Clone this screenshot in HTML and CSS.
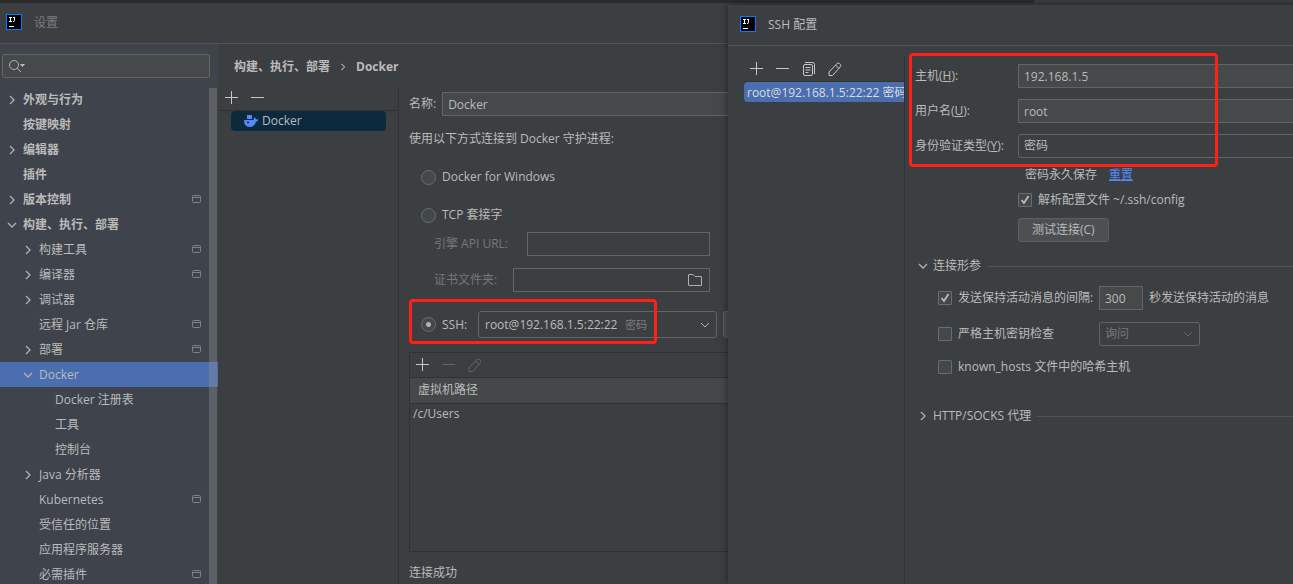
FILE: index.html
```html
<!DOCTYPE html>
<html lang="zh-CN">
<head>
    <meta charset="UTF-8">
    <meta name="viewport" content="width=device-width, initial-scale=1.0">
    <title>设置</title>
    <link rel="stylesheet" href="styles.css">
</head>
<body>
    <svg class="sprite" aria-hidden="true">
        <symbol id="logo" viewBox="0 0 16 16">
            <rect width="16" height="16" fill="#087cfa" stroke="none"/>
            <rect x="1" y="1" width="14" height="14" fill="#000" stroke="none"/>
            <path d="M3 3.500h3M4.500 3.500v4M3 7.500h3M7 3.500h2M8.500 3v3.500q0 1-1.500 1M3 12.500h5" fill="none" stroke="#fff" stroke-width="1"/>
        </symbol>
        <symbol id="right" viewBox="0 0 10 10"><path d="M3 1l4 4-4 4"/></symbol>
        <symbol id="down" viewBox="0 0 10 10"><path d="M1 3l4 4 4-4"/></symbol>
        <symbol id="plus" viewBox="0 0 16 16"><path d="M8.500 1v13M2 7.500h13"/></symbol>
        <symbol id="minus" viewBox="0 0 16 16"><path d="M2 7.500h13"/></symbol>
        <symbol id="pencil" viewBox="0 0 16 16"><path d="M3 14.500v-3.500l8-8.500q1.200-1 2.500 0l.8.8q1 1.300 0 2.500L6.500 14.500zM9.500 4l3.500 3.500"/></symbol>
        <symbol id="copy" viewBox="0 0 16 16"><rect x="3.500" y="3.500" width="9" height="11" rx="1.500"/><path d="M5 1.500h7.500q2 0 2 2V13M5.500 6.500h5M5.500 9h5M5.500 11.500h3"/></symbol>
        <symbol id="folder" viewBox="0 0 16 16"><path d="M1.500 13V3q0-.5.5-.5h4l2 2h6q.5 0 .5.5v8q0 .5-.5.5H2q-.5 0-.5-.5z"/></symbol>
        <symbol id="project" viewBox="0 0 10 10"><path d="M1.500.5h6q1 0 1 1v5q0 1-1 1h-6q-1 0-1-1v-5q0-1 1-1zM.5 2.500h8"/></symbol>
        <symbol id="docker" viewBox="0 0 16 16"><path d="M4 2h5v4H4zM1 7h9.500q.3-2.200 1.200-3l1.300 2.200 2.500.3q-.6 1.700-2.700 2.500Q11.500 14 6.500 14 1 14 1 7z" fill="#548af7" stroke="none"/><circle cx="5" cy="9.500" r="1" fill="#0d293e" stroke="none"/></symbol>
    </svg>

    <div class="editor"></div>

    <main class="settings">
        <header class="title-bar">
            <svg class="logo"><use href="#logo"/></svg>
            <h1 class="muted">设置</h1>
        </header>

        <div class="settings-body">
            <aside class="sidebar">
                <label class="search">
                    <svg class="search-icon" viewBox="0 0 18 14"><circle cx="6" cy="6" r="4.500"/><path d="M9 9l4 4"/><path d="M12 5h5l-2.500 3z" fill="#bbb" stroke="none"/></svg>
                    <input type="search" aria-label="搜索">
                </label>
                <nav class="tree">
                    <a href="#" class="node top"><svg class="arrow"><use href="#right"/></svg>外观与行为</a>
                    <a href="#" class="node top"><span class="arrow"></span>按键映射</a>
                    <a href="#" class="node top"><svg class="arrow"><use href="#right"/></svg>编辑器</a>
                    <a href="#" class="node top"><span class="arrow"></span>插件</a>
                    <a href="#" class="node top"><svg class="arrow"><use href="#right"/></svg>版本控制<svg class="project"><use href="#project"/></svg></a>
                    <a href="#" class="node top"><svg class="arrow"><use href="#down"/></svg>构建、执行、部署</a>
                    <a href="#" class="node child"><svg class="arrow"><use href="#right"/></svg>构建工具<svg class="project"><use href="#project"/></svg></a>
                    <a href="#" class="node child"><svg class="arrow"><use href="#right"/></svg>编译器<svg class="project"><use href="#project"/></svg></a>
                    <a href="#" class="node child"><svg class="arrow"><use href="#right"/></svg>调试器</a>
                    <a href="#" class="node child"><span class="arrow"></span>远程 Jar 仓库<svg class="project"><use href="#project"/></svg></a>
                    <a href="#" class="node child"><svg class="arrow"><use href="#right"/></svg>部署<svg class="project"><use href="#project"/></svg></a>
                    <a href="#" class="node child selected"><svg class="arrow"><use href="#down"/></svg>Docker</a>
                    <a href="#" class="node leaf"><span class="arrow"></span>Docker 注册表</a>
                    <a href="#" class="node leaf"><span class="arrow"></span>工具</a>
                    <a href="#" class="node leaf"><span class="arrow"></span>控制台</a>
                    <a href="#" class="node child"><svg class="arrow"><use href="#right"/></svg>Java 分析器</a>
                    <a href="#" class="node child"><span class="arrow"></span>Kubernetes<svg class="project"><use href="#project"/></svg></a>
                    <a href="#" class="node child"><span class="arrow"></span>受信任的位置</a>
                    <a href="#" class="node child"><span class="arrow"></span>应用程序服务器</a>
                    <a href="#" class="node child"><span class="arrow"></span>必需插件<svg class="project"><use href="#project"/></svg></a>
                </nav>
                <div class="scrollbar"></div>
            </aside>

            <section class="content">
                <div class="breadcrumb">
                    <span>构建、执行、部署</span>
                    <svg class="arrow"><use href="#right"/></svg>
                    <span>Docker</span>
                </div>
                <div class="split">
                    <div class="servers">
                        <div class="toolbar">
                            <button aria-label="添加"><svg><use href="#plus"/></svg></button>
                            <button aria-label="移除"><svg><use href="#minus"/></svg></button>
                        </div>
                        <a href="#" class="server"><svg><use href="#docker"/></svg>Docker</a>
                    </div>

                    <form class="docker-form">
                        <div class="name-row">
                            <label for="name">名称:</label>
                            <input type="text" id="name" value="Docker">
                        </div>
                        <p class="hint">使用以下方式连接到 Docker 守护进程:</p>
                        <label class="radio-row"><input type="radio" name="daemon">Docker for Windows</label>
                        <label class="radio-row"><input type="radio" name="daemon">TCP 套接字</label>
                        <div class="tcp-row api">
                            <label for="api">引擎 API URL:</label>
                            <input type="text" id="api" disabled>
                        </div>
                        <div class="tcp-row certs">
                            <label for="certs">证书文件夹:</label>
                            <div class="folder-field">
                                <input type="text" id="certs" disabled>
                                <svg><use href="#folder"/></svg>
                            </div>
                        </div>
                        <div class="ssh-row">
                            <label class="radio-label"><input type="radio" name="daemon" checked>SSH:</label>
                            <div class="combo">
                                <select aria-label="SSH 配置"><option>root@192.168.1.5:22:22</option></select>
                                <span class="combo-note muted">密码</span>
                                <svg><use href="#down"/></svg>
                            </div>
                            <button type="button" class="button">...</button>
                            <div class="mark"></div>
                        </div>
                        <div class="paths">
                            <div class="toolbar">
                                <button type="button" aria-label="添加"><svg><use href="#plus"/></svg></button>
                                <button type="button" aria-label="移除" disabled><svg><use href="#minus"/></svg></button>
                                <button type="button" aria-label="编辑" disabled><svg><use href="#pencil"/></svg></button>
                            </div>
                            <table>
                                <thead><tr><th>虚拟机路径</th></tr></thead>
                                <tbody><tr><td>/c/Users</td></tr></tbody>
                            </table>
                        </div>
                        <p class="status">连接成功</p>
                    </form>
                </div>
            </section>
        </div>
    </main>

    <section class="dialog">
        <header class="title-bar">
            <svg class="logo"><use href="#logo"/></svg>
            <h2>SSH 配置</h2>
        </header>
        <div class="dialog-body">
            <div class="configs">
                <div class="toolbar">
                    <button aria-label="添加"><svg><use href="#plus"/></svg></button>
                    <button aria-label="移除"><svg><use href="#minus"/></svg></button>
                    <button aria-label="复制"><svg><use href="#copy"/></svg></button>
                    <button aria-label="编辑"><svg><use href="#pencil"/></svg></button>
                </div>
                <a href="#" class="config">root@192.168.1.5:22:22 密码</a>
            </div>

            <form class="ssh-form">
                <div class="fields">
                    <label for="host">主机(<u>H</u>):</label>
                    <input type="text" id="host" value="192.168.1.5">
                    <label for="user">用户名(<u>U</u>):</label>
                    <input type="text" id="user" value="root">
                    <label for="auth">身份验证类型(<u>Y</u>):</label>
                    <select id="auth"><option>密码</option></select>
                    <div class="mark"></div>
                </div>
                <div class="extra">
                    <p class="saved">密码永久保存<a href="#">重置</a></p>
                    <label class="check"><input type="checkbox" checked>解析配置文件 ~/.ssh/config</label>
                    <button type="button" class="button test">测试连接(C)</button>
                </div>

                <h3 class="group"><svg class="arrow"><use href="#down"/></svg>连接形参</h3>
                <div class="params">
                    <label class="check"><input type="checkbox" checked>发送保持活动消息的间隔:</label>
                    <div class="interval">
                        <input type="text" id="interval" value="300">
                        <label for="interval">秒发送保持活动的消息</label>
                    </div>
                    <label class="check"><input type="checkbox">严格主机密钥检查</label>
                    <div class="combo ask">
                        <select aria-label="严格主机密钥检查" disabled><option>询问</option></select>
                        <svg><use href="#down"/></svg>
                    </div>
                    <label class="check wide"><input type="checkbox">known_hosts 文件中的哈希主机</label>
                </div>
                <h3 class="group proxy"><svg class="arrow"><use href="#right"/></svg>HTTP/SOCKS 代理</h3>
            </form>
        </div>
    </section>
</body>
</html>
```
FILE: styles.css
```css
* {
    box-sizing: border-box;
}

body {
    margin: 0;
    height: 100vh;
    display: flex;
    flex-direction: column;
    position: relative;
    overflow: hidden;
    background-color: #3c3f41;
    color: #bbbbbb;
    font: 12px/18px "Open Sans", "Noto Sans CJK SC", sans-serif;
}

h1, h2, h3, p {
    margin: 0;
    font-size: 12px;
    font-weight: normal;
}

a {
    color: inherit;
    text-decoration: none;
}

svg {
    flex: none;
    fill: none;
    stroke: #afb1b3;
    stroke-width: 1;
}

.sprite {
    position: absolute;
    width: 0;
    height: 0;
}

input, select, button {
    margin: 0;
    font: inherit;
    color: inherit;
}

input[type="text"], select {
    height: 24px;
    min-width: 0;
    padding: 0 5px;
    border: 1px solid #646464;
    border-radius: 0;
    background-color: #45494a;
    outline: none;
}

select {
    appearance: none;
    border-radius: 3px;
    background-color: #3c3f41;
    opacity: 1;
}

input[type="text"]:disabled {
    background-color: #3c3f41;
}

.muted {
    color: #7c7c7c;
}

.editor {
    height: 3px;
    flex: none;
    background: linear-gradient(to right, #2b2b2b 80%, #3c3f41 80%);
}

.title-bar {
    display: flex;
    align-items: center;
    gap: 12px;
    height: 41px;
    flex: none;
    padding: 0 6px 2px;
    border-bottom: 1px solid #515355;
}

.logo {
    width: 16px;
    height: 16px;
}

.title-bar h1, .title-bar h2 {
    padding-top: 2px;
}

/* settings window */
.settings {
    flex: 1;
    min-height: 0;
    display: flex;
    flex-direction: column;
}

.settings-body {
    flex: 1;
    min-height: 0;
    display: flex;
}

.sidebar {
    position: relative;
    width: 218px;
    flex: none;
    overflow: hidden;
    background-color: #3e434c;
}

.search {
    display: flex;
    align-items: center;
    height: 24px;
    margin: 10px 8px 9px 2px;
    padding-left: 5px;
    border: 1px solid #646464;
    border-radius: 2px;
    background-color: #45494a;
}

.search input {
    flex: 1;
    min-width: 0;
    border: none;
    background: none;
    outline: none;
}

.search-icon {
    width: 18px;
    height: 14px;
}

.node {
    display: flex;
    align-items: center;
    height: 25px;
    padding-right: 16px;
    padding-left: 7px;
}

.arrow {
    width: 10px;
    height: 10px;
    flex: none;
    margin-right: 6px;
    stroke-width: 1.3;
}

.node.top {
    font-weight: bold;
}

.node.child {
    padding-left: 23px;
}

.node.leaf {
    padding-left: 39px;
}

.node.selected {
    background-color: #4b6eaf;
}

.project {
    width: 10px;
    height: 10px;
    margin-left: auto;
    stroke: #7d8188;
}

.scrollbar {
    position: absolute;
    top: 44px;
    right: 1px;
    bottom: 0;
    width: 8px;
    background-color: rgba(150, 150, 150, 0.35);
}

.content {
    flex: 1;
    min-width: 0;
    display: flex;
    flex-direction: column;
}

.breadcrumb {
    display: flex;
    align-items: center;
    gap: 9px;
    height: 42px;
    padding: 4px 16px 0;
    font-weight: bold;
}

.breadcrumb .arrow {
    width: 8px;
    height: 8px;
    margin: 0;
}

.split {
    flex: 1;
    display: flex;
}

.servers {
    width: 181px;
    flex: none;
    border-right: 1px solid #313335;
}

.toolbar {
    display: flex;
    align-items: center;
    gap: 10px;
    height: 25px;
    padding-left: 5px;
    border-bottom: 1px solid #323232;
}

.toolbar button {
    padding: 0;
    border: none;
    background: none;
}

.toolbar svg {
    display: block;
    width: 16px;
    height: 16px;
    stroke: #c5c7c9;
}

.toolbar button:disabled svg {
    stroke: #626466;
}

.server {
    display: flex;
    align-items: center;
    gap: 3px;
    height: 20px;
    margin: 0 12px 0 13px;
    padding-left: 12px;
    border-radius: 4px;
    background-color: #0d293e;
}

.server svg {
    width: 16px;
    height: 16px;
}

.docker-form {
    flex: 1;
    padding: 6px 10px 0;
}

.name-row {
    display: flex;
    align-items: center;
    gap: 6px;
}

.name-row input {
    flex: 1;
}

.hint {
    margin-top: 14px;
}

.radio-row {
    display: flex;
    align-items: center;
    gap: 6px;
    margin-top: 20px;
    padding-left: 12px;
}

input[type="radio"] {
    appearance: none;
    width: 15px;
    height: 15px;
    border: 1px solid #6b6b6b;
    border-radius: 50%;
    background-color: #43494a;
}

input[type="radio"]:checked {
    background-image: radial-gradient(circle, #b0b0b0 2px, transparent 3px);
}

.tcp-row {
    display: flex;
    align-items: center;
    gap: 16px;
    width: 301px;
    margin-top: 8px;
    padding-left: 25px;
    color: #777777;
}

.tcp-row.api label {
    width: 77px;
}

.tcp-row.certs {
    margin-top: 12px;
}

.tcp-row > input {
    flex: 1;
}

.folder-field {
    display: flex;
    flex: 1;
    position: relative;
}

.folder-field input {
    flex: 1;
    padding-right: 24px;
}

.folder-field svg {
    position: absolute;
    top: 4px;
    right: 7px;
    width: 16px;
    height: 16px;
}

.ssh-row {
    display: flex;
    position: relative;
    margin-top: 19px;
    padding-left: 12px;
}

.radio-label {
    display: flex;
    align-items: center;
    gap: 6px;
    width: 57px;
}

.combo {
    display: flex;
    position: relative;
    width: 239px;
}

.combo select {
    flex: 1;
    padding: 0 6px;
}

.ssh-row select {
    height: 27px;
}

.combo svg {
    position: absolute;
    top: 9px;
    right: 7px;
    width: 10px;
    height: 10px;
    pointer-events: none;
}

.combo-note {
    position: absolute;
    top: 5px;
    left: 147px;
    font-size: 11px;
    pointer-events: none;
}

.button {
    padding: 0 12px;
    border: 1px solid #5e6060;
    border-radius: 3px;
    background-color: #4c5052;
}

.ssh-row .button {
    margin-left: 6px;
}

/* red frames over the fields to fill in */
.mark {
    position: absolute;
    border: 3px solid #ff2116;
    border-radius: 4px;
    pointer-events: none;
}

.ssh-row .mark {
    top: -12px;
    bottom: -6px;
    left: 0;
    width: 248px;
}

.paths {
    height: 200px;
    margin-top: 14px;
    border: 1px solid #323232;
}

.paths .toolbar {
    padding-left: 4px;
}

table {
    width: 100%;
    border-collapse: collapse;
}

th {
    height: 25px;
    padding: 0 8px;
    border-bottom: 1px solid #323232;
    background-color: #45484a;
    font-weight: normal;
    text-align: left;
}

td {
    height: 22px;
    padding: 0 3px;
}

.status {
    margin-top: 12px;
}

/* ssh dialog, lies over the settings window and runs out of view */
.dialog {
    position: absolute;
    top: 5px;
    left: 728px;
    right: -60px;
    bottom: 0;
    display: flex;
    flex-direction: column;
    background-color: #3c3f41;
    box-shadow: 0 0 8px rgba(0, 0, 0, 0.5);
}

.dialog .title-bar {
    padding-left: 12px;
}

.dialog-body {
    flex: 1;
    display: flex;
}

.configs {
    width: 177px;
    flex: none;
    margin-top: 11px;
    padding-left: 16px;
    overflow: hidden;
    border-right: 1px solid #323232;
}

.configs .toolbar {
    padding-left: 4px;
}

.config {
    display: block;
    height: 20px;
    padding-left: 3px;
    line-height: 21px;
    border-radius: 4px 0 0 4px;
    background-color: #4b6eaf;
    color: #dddddd;
    white-space: nowrap;
    overflow: hidden;
}

.ssh-form {
    flex: 1;
    padding-top: 18px;
}

.fields {
    position: relative;
    display: grid;
    grid-template-columns: 103px 1fr;
    align-items: center;
    row-gap: 11px;
    padding-left: 10px;
}

.fields .mark {
    top: -11px;
    bottom: -9px;
    left: 4px;
    width: 309px;
}

.extra {
    padding-left: 113px;
}

.saved {
    margin-top: 8px;
    padding-left: 7px;
}

.saved a {
    margin-left: 12px;
    color: #548af7;
    text-decoration: underline;
}

.check {
    display: flex;
    align-items: center;
    gap: 6px;
}

.extra .check {
    margin-top: 7px;
}

input[type="checkbox"] {
    appearance: none;
    width: 14px;
    height: 14px;
    border: 1px solid #6b6b6b;
    border-radius: 1px;
    background-color: #43494a;
}

input[type="checkbox"]:checked {
    background-image: url("data:image/svg+xml,%3Csvg xmlns='http://www.w3.org/2000/svg' viewBox='0 0 12 12'%3E%3Cpath d='M2.500 6l2.500 3 4.500-7' fill='none' stroke='%23bbbbbb' stroke-width='1.800'/%3E%3C/svg%3E");
}

.test {
    height: 24px;
    margin-top: 9px;
    padding: 0 13px;
}

.group {
    display: flex;
    align-items: center;
    margin-top: 15px;
    padding-left: 13px;
}

.group .arrow {
    margin-right: 5px;
}

.group::after {
    content: "";
    flex: 1;
    height: 1px;
    margin-left: 6px;
    background-color: #515355;
}

.params {
    display: grid;
    grid-template-columns: 161px 1fr;
    align-items: center;
    row-gap: 12px;
    margin-top: 11px;
    padding-left: 33px;
}

.interval {
    display: flex;
    align-items: center;
    gap: 6px;
}

.interval input {
    width: 44px;
}

.combo.ask {
    width: 101px;
    color: #777777;
}

.ask svg {
    top: 7px;
    stroke: #646464;
}

.ask select {
    padding: 0 5px;
}

.wide {
    grid-column: span 2;
}

.group.proxy {
    margin-top: 31px;
}
```
